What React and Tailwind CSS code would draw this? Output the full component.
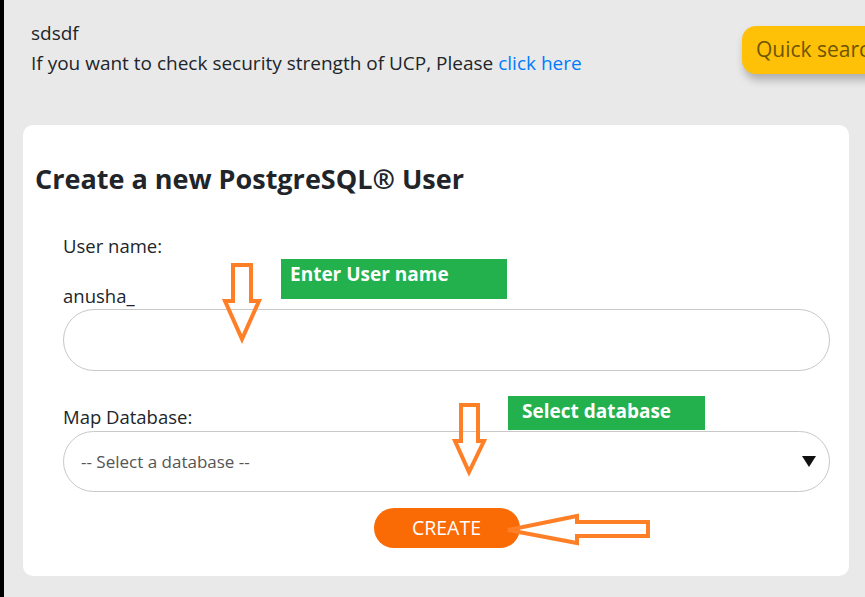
import React from "react";

const font = { fontFamily: '"Open Sans", "Noto Sans", sans-serif' };

// orange hand-drawn arrows (screenshot annotations)
const Arrows = () => (
  <svg className="pointer-events-none absolute -left-[4px] top-0" width="865" height="597">
    <g fill="none" stroke="#ff7f27" strokeWidth="4" strokeLinejoin="miter">
      <polygon points="233,265 251,265 251,301 259,301 242,339 225,301 233,301" />
      <polygon points="461,405 478,405 478,441 484,441 469,472 455,441 461,441" />
      <polygon points="648,522 648,536 577,536 577,543 508,530 577,516 577,522" />
    </g>
  </svg>
);

export default function App() {
  return (
    <div
      className="relative flex min-h-[597px] overflow-hidden border-l-4 border-black bg-[#e9e9e9] text-[#212529]"
      style={font}
    >
      <div className="w-full pl-[19px]">
        {/* top bar */}
        <div className="flex items-start justify-between">
          <div className="pl-[8px] pt-[18px] text-[19px] leading-[30px]">
            <div>sdsdf</div>
            <div>
              If you want to check security strength of UCP, Please{" "}
              <a className="text-[#007bff]">click here</a>
            </div>
          </div>
          <button className="-mr-[27px] mt-[26px] h-[48px] w-[150px] shrink-0 overflow-hidden whitespace-nowrap rounded-[14px] bg-[#ffc107] pl-[14px] text-left text-[21px] text-[#6e5500] shadow-[2px_6px_8px_rgba(0,0,0,0.25)]">
            Quick search
          </button>
        </div>

        {/* card */}
        <div className="mt-[47px] h-[451px] w-[826px] rounded-[10px] bg-white pl-[12px] pt-[38px]">
          <h1 className="text-[27px] font-bold leading-[32px]">Create a new PostgreSQL® User</h1>

          <div className="ml-[28px] mr-[19px] flex flex-col">
            <label className="mt-[39px] text-[18.5px] leading-[24px]">User name:</label>
            <div className="mt-[26px] text-[18.5px] leading-[24px]">anusha_</div>
            <input className="mt-[1px] h-[62px] w-full rounded-full border border-[#c8c8c8] px-[17px] outline-none" />

            <label className="mt-[34px] text-[18.5px] leading-[24px]">Map Database:</label>
            <div className="mt-[2px] flex h-[61px] w-full items-center justify-between rounded-full border border-[#c8c8c8] pl-[17px] pr-[13px]">
              <span className="text-[17px] text-[#555]">-- Select a database --</span>
              <svg width="14" height="13" viewBox="0 0 14 13">
                <polygon points="0,1 14,1 7,12" fill="#111" />
              </svg>
            </div>

            <button className="mx-auto mt-[16px] h-[40px] w-[146px] rounded-full bg-[#fa6a05] text-[19.5px] text-white">
              CREATE
            </button>
          </div>
        </div>
      </div>

      {/* annotation labels */}
      <div className="absolute left-[277px] top-[259px] h-[40px] w-[226px] bg-[#22b14c] pl-[9px] pt-[1px] text-[19px] font-bold text-white">
        Enter User name
      </div>
      <div className="absolute left-[504px] top-[396px] h-[34px] w-[197px] bg-[#22b14c] pl-[14px] pt-[1px] text-[19px] font-bold text-white">
        Select database
      </div>
      <Arrows />
    </div>
  );
}
